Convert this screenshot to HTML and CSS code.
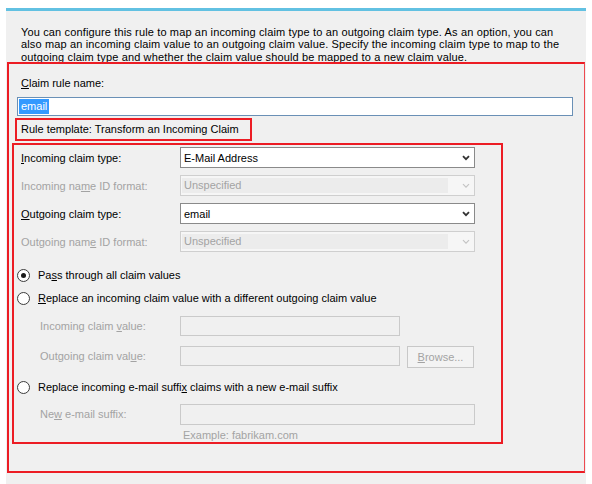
FILE: index.html
```html
<!DOCTYPE html>
<html>
<head>
<meta charset="utf-8">
<link rel="stylesheet" href="styles.css">
</head>
<body>
<div class="panel">
  <p class="intro">You can configure this rule to map an incoming claim type to an outgoing claim type. As an option, you can<br>also map an incoming claim value to an outgoing claim value. Specify the incoming claim type to map to the<br>outgoing claim type and whether the claim value should be mapped to a new claim value.</p>
  <div class="outer">
    <div class="label-line"><u>C</u>laim rule name:</div>
    <div class="name-input"><span class="sel">email</span></div>
    <div class="template">Rule template: Transform an Incoming Claim</div>
    <div class="inner">
      <div class="grid">
        <div class="lbl"><u>I</u>ncoming claim type:</div>
        <div class="combo"><span class="val">E-Mail Address</span><svg class="chev" width="8" height="6" viewBox="0 0 8 6"><path d="M1 1.2 L4 4.2 L7 1.2" fill="none" stroke="#333" stroke-width="1.8"/></svg></div>
        <div class="lbl dis">Incoming na<u>m</u>e ID format:</div>
        <div class="combo dis"><span class="val">Unspecified</span><svg class="chev" width="8" height="6" viewBox="0 0 8 6"><path d="M1 1.2 L4 4.2 L7 1.2" fill="none" stroke="#c4c4c4" stroke-width="1.2"/></svg></div>
        <div class="lbl"><u>O</u>utgoing claim type:</div>
        <div class="combo"><span class="val">email</span><svg class="chev" width="8" height="6" viewBox="0 0 8 6"><path d="M1 1.2 L4 4.2 L7 1.2" fill="none" stroke="#333" stroke-width="1.8"/></svg></div>
        <div class="lbl dis">Outgoing nam<u>e</u> ID format:</div>
        <div class="combo dis"><span class="val">Unspecified</span><svg class="chev" width="8" height="6" viewBox="0 0 8 6"><path d="M1 1.2 L4 4.2 L7 1.2" fill="none" stroke="#c4c4c4" stroke-width="1.2"/></svg></div>
      </div>

      <div class="radio-row r1"><span class="radio on"></span><span>Pa<u>s</u>s through all claim values</span></div>
      <div class="radio-row r2"><span class="radio"></span><span><u>R</u>eplace an incoming claim value with a different outgoing claim value</span></div>

      <div class="sub s1">
        <div class="lbl dis">Incoming claim <u>v</u>alue:</div>
        <div class="field short"></div>
      </div>
      <div class="sub s2">
        <div class="lbl dis">Outgoing claim val<u>u</u>e:</div>
        <div class="field short"></div>
        <div class="btn"><u>B</u>rowse...</div>
      </div>

      <div class="radio-row r3"><span class="radio"></span><span>Replace incoming e-mail suffi<u>x</u> claims with a new e-mail suffix</span></div>

      <div class="sub s3">
        <div class="lbl dis">Ne<u>w</u> e-mail suffix:</div>
        <div class="field long"></div>
      </div>
      <div class="example">Example: fabrikam.com</div>
    </div>
  </div>
</div>
</body>
</html>
```
FILE: styles.css
```css
body {
  margin: 0;
  background: #ffffff;
  font-family: "Liberation Sans", Arial, sans-serif;
  font-size: 11px;
  color: #000000;
}

.panel {
  margin: 8px 0 0 6px;
  width: 580px;
  min-height: 476px;
  box-sizing: border-box;
  border-top: 3px solid #62c1e2;
  background: #f0f0f0;
  padding: 15px 1px 0 1px;
}

.intro {
  margin: 0 0 0 14px;
  height: 36px;
  line-height: 12.3px;
  letter-spacing: 0.14px;
  white-space: nowrap;
}

.outer {
  position: relative;
  height: 411px;
  box-sizing: border-box;
  border: 2px solid #ec1c24;
  border-right: 1px solid #ee4a50;
  padding-top: 11px;
}

.label-line {
  margin-left: 12px;
  height: 16px;
  line-height: 16px;
}

.name-input {
  margin: 6px 0 0 8px;
  width: 556px;
  height: 19px;
  box-sizing: border-box;
  border: 1px solid #6a90b6;
  background: #ffffff;
  padding: 1px 0 0 1px;
  display: flex;
}

.sel {
  background: #3399ff;
  color: #ffffff;
  height: 15px;
  line-height: 15px;
  padding: 0 2px;
}

.template {
  margin: 2px 0 0 6px;
  width: 237px;
  height: 23px;
  box-sizing: border-box;
  border: 2px solid #ec1c24;
  padding-left: 4px;
  line-height: 19px;
}

.inner {
  margin: 2px 0 0 3px;
  width: 491px;
  height: 301px;
  box-sizing: border-box;
  border: 2px solid #ec1c24;
  padding-top: 2px;
}

.grid {
  display: grid;
  grid-template-columns: 159px 295px;
  grid-auto-rows: 21px;
  row-gap: 7px;
  padding-left: 7px;
  align-items: center;
}

.lbl.dis,
.dis .val,
.btn,
.example {
  color: #a3a3a3;
}

.combo {
  height: 21px;
  box-sizing: border-box;
  border: 1px solid #8a8a8a;
  background: #ffffff;
  display: flex;
  align-items: center;
  padding: 0 4px 0 3px;
}

.combo .val {
  flex: 1;
}

.combo.dis {
  border-color: #cfcfcf;
  background: #f6f6f6;
  padding: 2px 4px 2px 1px;
  align-items: stretch;
}

.combo.dis .val {
  background: #ececec;
  padding-left: 2px;
  margin-right: 14px;
  line-height: 15px;
}

.combo.dis .chev {
  align-self: center;
}

.radio-row {
  display: flex;
  align-items: center;
  gap: 8px;
  height: 16px;
  padding-left: 3px;
}

.r1 { margin-top: 15px; }
.r2 { margin-top: 7px; }
.r3 { margin-top: 11px; }

.radio {
  width: 13px;
  height: 13px;
  box-sizing: border-box;
  border: 1px solid #3c3c3c;
  border-radius: 50%;
  background: #ffffff;
  display: flex;
  align-items: center;
  justify-content: center;
}

.radio.on::after {
  content: "";
  width: 5px;
  height: 5px;
  border-radius: 50%;
  background: #1a1a1a;
}

.sub {
  display: flex;
  align-items: flex-start;
  padding-left: 26px;
}

.sub .lbl {
  width: 140px;
  line-height: 20px;
}

.s1 { margin-top: 10px; }
.s2 { margin-top: 10px; }
.s3 { margin-top: 9px; }

.field {
  box-sizing: border-box;
  border: 1px solid #cacaca;
  background: #f0f0f0;
}

.field.short {
  width: 220px;
  height: 20px;
}

.field.long {
  width: 295px;
  height: 21px;
}

.btn {
  margin-left: 7px;
  width: 67px;
  height: 22px;
  box-sizing: border-box;
  border: 1px solid #c8c8c8;
  background: #f3f3f3;
  text-align: center;
  line-height: 20px;
}

.example {
  margin-top: 3px;
  padding-left: 169px;
  line-height: 14px;
}
```
